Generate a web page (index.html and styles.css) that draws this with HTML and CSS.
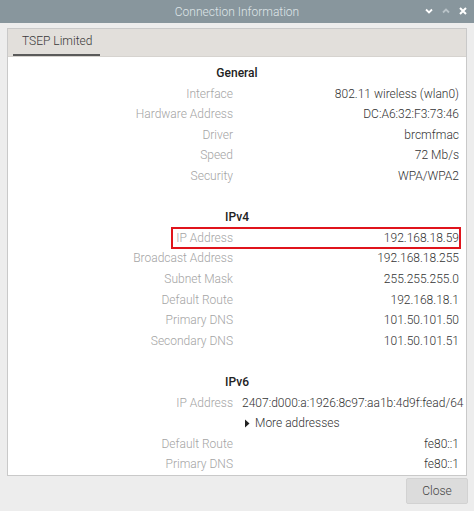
FILE: index.html
```html
<!DOCTYPE html>
<html lang="en">
<head>
    <meta charset="UTF-8">
    <title>Connection Information</title>
    <link rel="stylesheet" href="styles.css">
</head>
<body>
    <div class="titlebar">
        <span class="title">Connection Information</span>
        <div class="wm-buttons">
            <svg width="10" height="8" viewBox="0 0 10 8"><path d="M2 2.5 L5 5.5 L8 2.5" fill="none" stroke="#fff" stroke-width="1.8"/></svg>
            <svg width="10" height="8" viewBox="0 0 10 8"><path d="M2 5.5 L5 2.5 L8 5.5" fill="none" stroke="#b9c3c8" stroke-width="1.8"/></svg>
            <svg width="10" height="10" viewBox="0 0 10 10"><path d="M2 2 L8 8 M8 2 L2 8" fill="none" stroke="#fff" stroke-width="2"/></svg>
        </div>
    </div>

    <div class="notebook">
        <div class="tabs">
            <div class="tab">TSEP Limited</div>
        </div>
        <div class="page">
            <div class="heading">General</div>
            <div class="row"><span class="label">Interface</span><span class="value">802.11 wireless (wlan0)</span></div>
            <div class="row"><span class="label">Hardware Address</span><span class="value">DC:A6:32:F3:73:46</span></div>
            <div class="row"><span class="label">Driver</span><span class="value">brcmfmac</span></div>
            <div class="row"><span class="label">Speed</span><span class="value">72 Mb/s</span></div>
            <div class="row"><span class="label">Security</span><span class="value">WPA/WPA2</span></div>
            <div class="spacer"></div>

            <div class="heading">IPv4</div>
            <div class="row mark"><span class="label">IP Address</span><span class="value">192.168.18.59</span></div>
            <div class="row"><span class="label">Broadcast Address</span><span class="value">192.168.18.255</span></div>
            <div class="row"><span class="label">Subnet Mask</span><span class="value">255.255.255.0</span></div>
            <div class="row"><span class="label">Default Route</span><span class="value">192.168.18.1</span></div>
            <div class="row"><span class="label">Primary DNS</span><span class="value">101.50.101.50</span></div>
            <div class="row"><span class="label">Secondary DNS</span><span class="value">101.50.101.51</span></div>
            <div class="spacer"></div>

            <div class="heading">IPv6</div>
            <div class="row"><span class="label">IP Address</span><span class="value">2407:d000:a:1926:8c97:aa1b:4d9f:fead/64</span></div>
            <div class="row"><span class="label"></span><span class="expander"><svg width="8" height="9" viewBox="0 0 8 9"><path d="M2 0.5 L6.5 4.5 L2 8.5 Z" fill="#222"/></svg>More addresses</span></div>
            <div class="row"><span class="label">Default Route</span><span class="value">fe80::1</span></div>
            <div class="row"><span class="label">Primary DNS</span><span class="value">fe80::1</span></div>
        </div>
    </div>

    <div class="actions">
        <button class="close">Close</button>
    </div>
</body>
</html>
```

FILE: styles.css
```css
body {
    margin: 0;
    width: 474px;
    height: 511px;
    background: #ededed;
    font-family: Roboto, "Noto Sans", sans-serif;
    font-size: 12px;
    color: #333;
    overflow: hidden;
}
.titlebar {
    height: 23px;
    background: #88969d;
    display: flex;
    align-items: center;
    justify-content: center;
    position: relative;
}
.title {
    color: #dfe5e8;
    font-size: 12px;
    font-weight: 300;
}
.wm-buttons {
    position: absolute;
    right: 6px;
    top: 6px;
    display: flex;
    gap: 7px;
    align-items: center;
}
.notebook {
    margin: 5px 7px 0 7px;
    border: 1px solid #c9c9c9;
    background: #fff;
}
.tabs {
    height: 27px;
    background: #e2dfdb;
    border-bottom: 1px solid #d6d3cf;
    display: flex;
    padding-left: 5px;
}
.tab {
    padding: 0 8px 0 9px;
    white-space: nowrap;
    line-height: 25px;
    border-bottom: 2px solid #5a5a5a;
    color: #3a3a3a;
    font-weight: 300;
}
.page {
    padding: 6px 0 7px 0;
    height: 418px;
    box-sizing: border-box;
}
.heading {
    text-align: center;
    font-weight: 500;
    color: #222;
    line-height: 20.6px;
}
.spacer {
    height: 20.6px;
}
.row {
    display: grid;
    grid-template-columns: 225px minmax(0, 1fr);
    column-gap: 9px;
    line-height: 20.6px;
    padding-right: 7px;
    font-weight: 300;
    position: relative;
    white-space: nowrap;
}
.label {
    text-align: right;
    color: #a4a4a4;
}
.value {
    text-align: right;
    color: #333;
}
.expander {
    text-align: left;
    color: #333;
}
.expander svg {
    margin: 0 4px -1px 1px;
}
.row.mark::after {
    content: "";
    position: absolute;
    left: 163px;
    right: 5px;
    top: -1px;
    bottom: -1px;
    border: 2px solid #e0141c;
}
.actions {
    display: flex;
    justify-content: flex-end;
    padding: 2px 6px 0 0;
}
.close {
    width: 62px;
    height: 26px;
    background: #dcdcdc;
    border: 1px solid #d2d2d2;
    border-radius: 2px;
    font-family: Roboto, "Noto Sans", sans-serif;
    font-size: 12px;
    font-weight: 300;
    color: #444;
}
```
